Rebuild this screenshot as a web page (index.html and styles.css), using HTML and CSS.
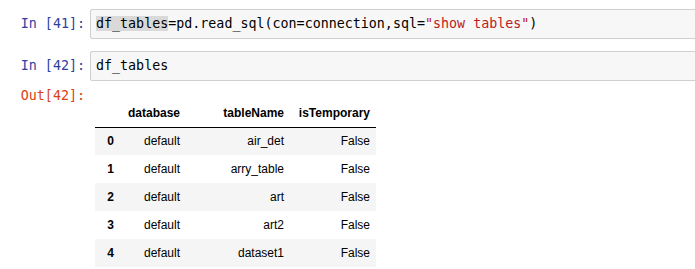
FILE: index.html
```html
<!DOCTYPE html>
<html lang="en">
<head>
  <meta charset="UTF-8">
  <title>Notebook</title>
  <link rel="stylesheet" href="styles.css">
</head>
<body>
  <div class="notebook">
    <div class="cell">
      <div class="prompt in">In&nbsp;[41]:</div>
      <div class="input"><span class="sel">df_tables</span>=pd.read_sql(con=connection,sql=<span class="str">"show tables"</span>)</div>
    </div>

    <div class="cell">
      <div class="prompt in">In&nbsp;[42]:</div>
      <div class="input">df_tables</div>
    </div>

    <div class="output">
      <div class="prompt out">Out[42]:</div>
      <div class="output-area">
        <table class="dataframe">
          <thead>
            <tr>
              <th class="c-idx"></th>
              <th class="c-db">database</th>
              <th class="c-name">tableName</th>
              <th class="c-temp">isTemporary</th>
            </tr>
          </thead>
          <tbody>
            <tr><th>0</th><td>default</td><td>air_det</td><td>False</td></tr>
            <tr><th>1</th><td>default</td><td>arry_table</td><td>False</td></tr>
            <tr><th>2</th><td>default</td><td>art</td><td>False</td></tr>
            <tr><th>3</th><td>default</td><td>art2</td><td>False</td></tr>
            <tr><th>4</th><td>default</td><td>dataset1</td><td>False</td></tr>
          </tbody>
        </table>
      </div>
    </div>
  </div>
</body>
</html>
```

FILE: styles.css
```css
body {
  margin: 0;
  background-color: white;
  overflow: hidden;
}
.notebook {
  padding-top: 9px;
}
.cell {
  display: flex;
  margin-bottom: 12px;
}
.prompt {
  flex: 0 0 85px;
  padding-right: 5px;
  text-align: right;
  font-family: 'DejaVu Sans Mono', monospace;
  font-size: 13.33px;
  line-height: 17px;
  padding-top: 6px;
}
.in {
  color: #303f9f;
}
.out {
  color: #d84315;
  padding-top: 6px;
}
.input {
  flex: 1;
  margin-right: -4px;
  background-color: #f7f7f7;
  border: 1px solid #cfcfcf;
  border-radius: 2px;
  padding: 5px 4px 6px 5px;
  font-family: 'DejaVu Sans Mono', monospace;
  font-size: 13.33px;
  line-height: 17px;
  color: #000;
  white-space: pre;
}
.sel {
  background-color: #d9d9d9;
}
.str {
  color: #ba2121;
}
.output {
  display: flex;
  margin-top: -12px;
}
.output-area {
  padding: 18px 0 0 5px;
}
.dataframe {
  border-collapse: collapse;
  table-layout: fixed;
  width: 281px;
  font-family: 'Liberation Sans', Arial, sans-serif;
  font-size: 12px;
  color: #000;
}
.dataframe th,
.dataframe td {
  box-sizing: border-box;
  height: 28px;
  padding: 0 6px;
  text-align: right;
  vertical-align: middle;
  line-height: 16px;
}
.dataframe th {
  font-weight: bold;
}
.dataframe thead th {
  border-bottom: 1px solid black;
}
.dataframe tbody tr:nth-child(odd) {
  background-color: #f5f5f5;
}
.c-idx { width: 25px; }
.c-db { width: 66px; }
.c-name { width: 104px; }
.c-temp { width: 86px; }
```
